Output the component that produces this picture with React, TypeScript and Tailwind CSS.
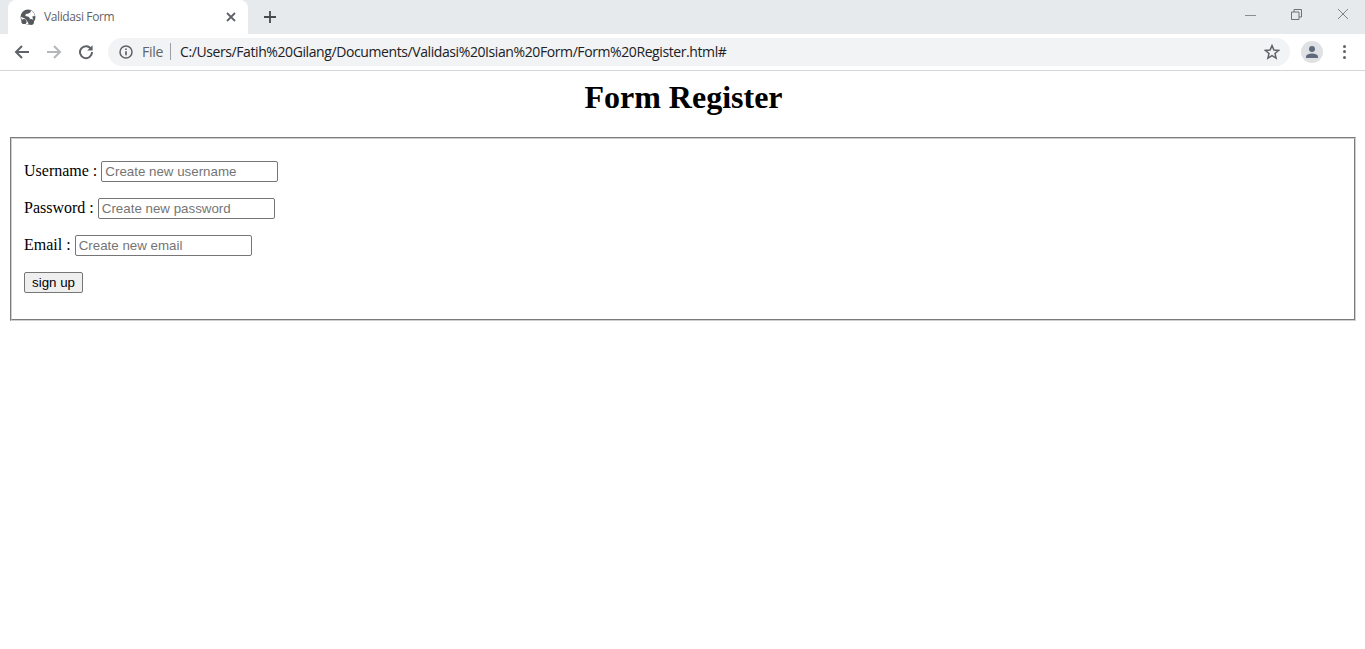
const Tab = () => (
  <div className="relative w-[240px] h-[34px] ml-2 bg-white rounded-t-lg flex items-center pl-3 pr-[9px]">
    <svg className="w-4 h-4 shrink-0" viewBox="0 0 16 16">
      <circle cx="8" cy="8" r="7.500" fill="#55595e" />
      <path
        d="M10.600 1.400 10.800 3 8.800 4.600 5.800 5 5.400 7 8.600 7.800 10 9.400 9.400 11.400 7.800 13.400 7 11.400 4.800 9.600 1 7.800 1.300 9.500 3 12.500 6.200 15 9.400 15 9.500 14.500 13.400 11 12.200 7.600 14.800 7 14.400 4.800 12.600 2.400Z"
        fill="#fff"
      />
      <circle cx="11" cy="13" r="3" fill="#55595e" />
      <circle cx="4" cy="12.500" r="2.600" fill="#55595e" />
    </svg>
    <span className="ml-2 text-[12px] text-[#5f6368] font-['Open_Sans','Noto_Sans',sans-serif] tracking-[-0.38px] flex-1">
      Validasi Form
    </span>
    <svg className="w-4 h-4 shrink-0 ml-px" viewBox="0 0 16 16" fill="none" stroke="#5f6368" strokeWidth="1.800">
      <path d="M4 4l8 8M12 4l-8 8" />
    </svg>
  </div>
);

const TitleBar = () => (
  <div className="flex items-start h-[34px] bg-[#e7eaed]">
    <Tab />
    <button className="ml-[14px] mt-[9px] w-4 h-4">
      <svg viewBox="0 0 16 16" fill="none" stroke="#474a4f" strokeWidth="1.800">
        <path d="M8 2v12M2 8h12" />
      </svg>
    </button>
    <div className="ml-auto flex items-start">
      <div className="w-[46px] h-7 flex items-center justify-center">
        <svg width="11" height="11" viewBox="0 0 11 11" stroke="#8a8e92" fill="none">
          <path d="M0 6.500h11" />
        </svg>
      </div>
      <div className="w-[46px] h-7 flex items-center justify-center pl-px">
        <svg width="11" height="11" viewBox="0 0 11 11" stroke="#6d7175" fill="none">
          <path d="M.5 3h7.500v7.500H.5zM3 3V.5h7.500V8H8" />
        </svg>
      </div>
      <div className="w-[46px] h-7 flex items-center justify-center pl-px">
        <svg width="12" height="12" viewBox="0 0 12 12" stroke="#7d8185" fill="none">
          <path d="M1 1l10 10M11 1L1 11" />
        </svg>
      </div>
    </div>
  </div>
);

const Toolbar = () => (
  <div className="flex items-center h-[37px] bg-white border-b border-[#d4d6d9] pb-px">
    <div className="flex items-center pl-[6px]">
      <div className="w-8 h-7 flex items-center justify-center">
        <svg width="16" height="16" viewBox="0 0 16 16" fill="none" stroke="#5f6368" strokeWidth="2">
          <path d="M15 8H2M8 2 2 8l6 6" />
        </svg>
      </div>
      <div className="w-8 h-7 flex items-center justify-center">
        <svg width="16" height="16" viewBox="0 0 16 16" fill="none" stroke="#b4b6b9" strokeWidth="2">
          <path d="M1 8h13M8 2l6 6-6 6" />
        </svg>
      </div>
      <div className="w-8 h-7 flex items-center justify-center">
        <svg width="16" height="16" viewBox="0 0 16 16" fill="none" stroke="#5f6368" strokeWidth="2">
          <path d="M13.200 5.200A6 6 0 1 0 14 8" />
          <path d="M14.600 1.200v5.400H9.200Z" fill="#5f6368" stroke="none" />
        </svg>
      </div>
    </div>
    <div className="flex items-center ml-[6px] w-[1182px] h-7 bg-[#f1f3f4] rounded-full pl-[11px] pr-[10px]">
      <svg width="14" height="14" viewBox="0 0 14 14" fill="none" stroke="#5f6368" strokeWidth="1.500">
        <circle cx="7" cy="7" r="6" />
        <path d="M7 6.200v4" strokeWidth="1.700" />
        <path d="M7 3.400v1.600" strokeWidth="1.700" />
      </svg>
      <span className="ml-[9px] text-[14px] leading-none text-[#5f6368] font-['Open_Sans','Noto_Sans',sans-serif] tracking-[-0.3px]">
        File
      </span>
      <div className="ml-[7px] w-px h-[17px] bg-[#9aa0a6]" />
      <span className="ml-[9px] flex-1 text-[14px] leading-none text-[#202124] font-['Open_Sans','Noto_Sans',sans-serif] tracking-[-0.405px]">
        C:/Users/Fatih%20Gilang/Documents/Validasi%20Isian%20Form/Form%20Register.html#
      </span>
      <svg width="16" height="16" viewBox="0 0 16 16" fill="none" stroke="#5f6368" strokeWidth="1.500">
        <path d="M8 1.600 9.900 6l4.700.4-3.600 3.100 1.100 4.600L8 11.700l-4.100 2.400L5 9.500 1.400 6.400 6.100 6Z" />
      </svg>
    </div>
    <div className="ml-[11px] w-[22px] h-[22px] rounded-full bg-[#dfe1e5] flex items-center justify-center">
      <svg width="14" height="14" viewBox="0 0 14 14" fill="#5f6b7c">
        <circle cx="7" cy="4" r="3" />
        <path d="M1 13v-1.600C1 9.400 4.500 8.400 7 8.400s6 1 6 3V13Z" />
      </svg>
    </div>
    <div className="ml-[20px] flex flex-col gap-[2.500px]">
      <div className="w-[3px] h-[3px] rounded-full bg-[#5f6368]" />
      <div className="w-[3px] h-[3px] rounded-full bg-[#5f6368]" />
      <div className="w-[3px] h-[3px] rounded-full bg-[#5f6368]" />
    </div>
  </div>
);

const inputClass =
  "ml-1 w-[177px] h-[21px] border border-[#767676] rounded-[2px] px-[3px] bg-white text-[13.333px] font-['Liberation_Sans',Arial,sans-serif] placeholder:text-[#757575] outline-none";

const FormRow = ({ label, type, placeholder }: { label: string; type: string; placeholder: string }) => (
  <p className="my-4 h-[21px] leading-[21px] flex items-center">
    <span className="mb-[2px]">{label} :</span>
    <input className={inputClass} type={type} placeholder={placeholder} />
  </p>
);

export default function App() {
  return (
    <div className="min-h-[649px] bg-white">
      <TitleBar />
      <Toolbar />
      <main className="font-['Liberation_Serif','Times_New_Roman',serif] text-[16px] text-black">
        <h1 className="text-[32px] font-bold text-center leading-[37px] pt-[8px] pl-[2px] mb-[21px]">Form Register</h1>
        <form className="mx-[10px] mr-[9px] h-[184px] border-2 [border-style:groove] border-[#cfcfcf] px-3 pt-[6px]">
          <FormRow label="Username" type="text" placeholder="Create new username" />
          <FormRow label="Password" type="password" placeholder="Create new password" />
          <FormRow label="Email" type="email" placeholder="Create new email" />
          <button
            type="button"
            className="block w-[59px] h-[21px] border border-[#767676] rounded-[2px] bg-[#efefef] text-[13.333px] leading-none font-['Liberation_Sans',Arial,sans-serif] text-black"
          >
            sign up
          </button>
        </form>
      </main>
    </div>
  );
}
